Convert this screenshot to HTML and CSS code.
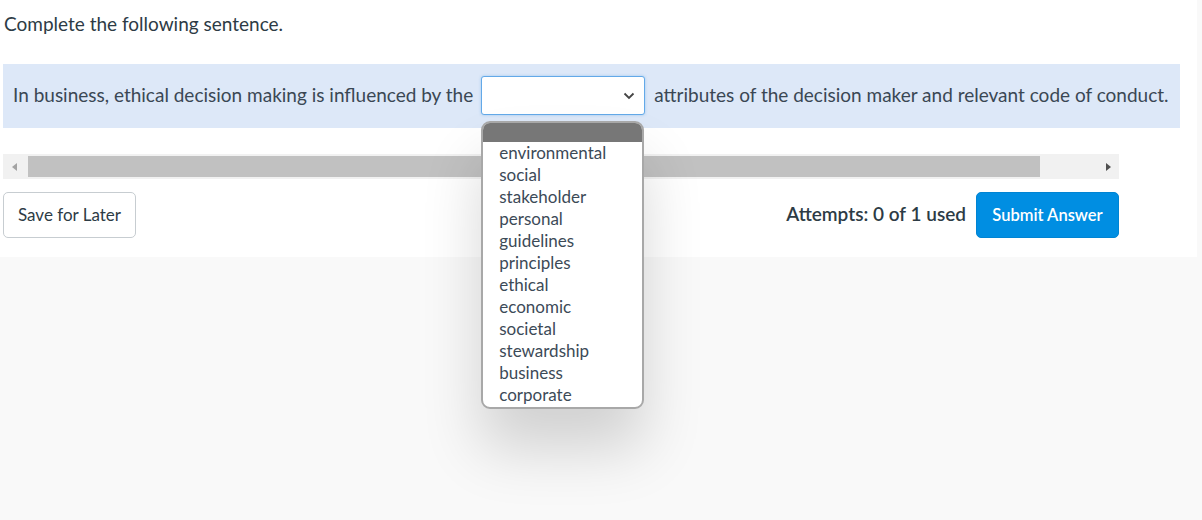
FILE: index.html
```html
<!DOCTYPE html>
<html>
<head>
<meta charset="utf-8">
<link rel="stylesheet" href="styles.css">
</head>
<body>
<div class="page">
<div class="panel">
  <p class="prompt">Complete the following sentence.</p>
  <div class="question">
    <span>In business, ethical decision making is influenced by the</span>
    <div class="select-wrap">
      <div class="select">
        <svg class="chev" width="12" height="8" viewBox="0 0 12 8"><path d="M1.5 1.5 L6 6 L10.5 1.5" fill="none" stroke="#444" stroke-width="1.8"/></svg>
      </div>
      <div class="dropdown">
        <div class="dd-head"></div>
        <ul class="dd-list">
          <li>environmental</li>
          <li>social</li>
          <li>stakeholder</li>
          <li>personal</li>
          <li>guidelines</li>
          <li>principles</li>
          <li>ethical</li>
          <li>economic</li>
          <li>societal</li>
          <li>stewardship</li>
          <li>business</li>
          <li>corporate</li>
        </ul>
      </div>
    </div>
    <span>attributes of the decision maker and relevant code of conduct.</span>
  </div>
  <div class="content">
    <div class="scrollbar">
      <span class="arrow left"></span>
      <div class="track"><div class="thumb"></div></div>
      <span class="arrow right"></span>
    </div>
    <div class="actions">
      <button class="btn save">Save for Later</button>
      <div class="right">
        <span class="attempts">Attempts: 0 of 1 used</span>
        <button class="btn submit">Submit Answer</button>
      </div>
    </div>
  </div>
</div>
</div>
</body>
</html>
```
FILE: styles.css
```css
html, body {
  margin: 0;
  padding: 0;
  background: #f9f9f9;
  font-family: Lato, "Noto Sans", sans-serif;
  color: #2d3b45;
}
.page {
  min-height: 520px;
  background: #f9f9f9;
}
.panel {
  width: 1197px;
  height: 257px;
  background: #fff;
  padding-left: 3px;
  box-sizing: border-box;
}
.prompt {
  margin: 0;
  padding-top: 12px;
  padding-left: 1px;
  height: 64px;
  box-sizing: border-box;
  font-size: 19px;
  line-height: 24px;
}
.question {
  width: 1177px;
  height: 64px;
  background: #dde8f8;
  display: flex;
  align-items: center;
  padding: 0 0 3px 10px;
  box-sizing: border-box;
  font-size: 19px;
  color: #3a4754;
}
.select-wrap {
  position: relative;
  margin: 0 9px 0 8px;
}
.select {
  width: 164px;
  height: 39px;
  box-sizing: border-box;
  background: #fff;
  border: 1px solid #63a9e8;
  border-radius: 3px;
  box-shadow: 0 0 3px rgba(80, 160, 230, 0.45);
  display: flex;
  align-items: center;
  justify-content: flex-end;
  padding-right: 9px;
  margin-top: 2px;
}
.dropdown {
  position: absolute;
  left: 0;
  top: 47px;
  width: 163px;
  box-sizing: border-box;
  border: 2px solid #a8a8a8;
  border-radius: 9px;
  background: #fff;
  overflow: hidden;
  box-shadow: 0 40px 60px rgba(0, 0, 0, 0.16);
  z-index: 5;
}
.dd-head {
  height: 19px;
  background: #777;
}
.dd-list {
  list-style: none;
  margin: 0;
  padding: 0 0 1px 16px;
}
.dd-list li {
  height: 22px;
  line-height: 22px;
  font-size: 17px;
  color: #3c4a57;
}
.content {
  width: 1116px;
  padding-top: 26px;
}
.scrollbar {
  height: 25px;
  background: #f1f1f1;
  display: flex;
  align-items: center;
}
.track {
  flex: 1;
  height: 21px;
  display: flex;
  align-items: center;
}
.thumb {
  width: 1012px;
  height: 21px;
  background: #c1c1c1;
}
.arrow {
  width: 0;
  height: 0;
  border-top: 4px solid transparent;
  border-bottom: 4px solid transparent;
}
.arrow.left {
  border-right: 5px solid #a3a3a3;
  margin: 0 11px 0 9px;
}
.arrow.right {
  border-left: 5px solid #505050;
  margin: 0 10px 0 66px;
}
.actions {
  display: flex;
  justify-content: space-between;
  align-items: center;
  margin-top: 13px;
}
.right {
  display: flex;
  align-items: center;
  gap: 10px;
}
.btn {
  font-family: Lato, "Noto Sans", sans-serif;
  height: 46px;
  border-radius: 5px;
  cursor: pointer;
}
.save {
  width: 133px;
  font-size: 17px;
  background: #fff;
  border: 1px solid #c7cdd1;
  color: #2d3b45;
  padding-bottom: 2px;
}
.attempts {
  font-size: 19px;
  font-weight: 600;
  color: #2d3b45;
  margin-bottom: 3px;
}
.submit {
  width: 143px;
  font-size: 16.5px;
  background: #008ee2;
  border: 1px solid #0084d3;
  color: #fff;
  font-weight: 600;
}
```
